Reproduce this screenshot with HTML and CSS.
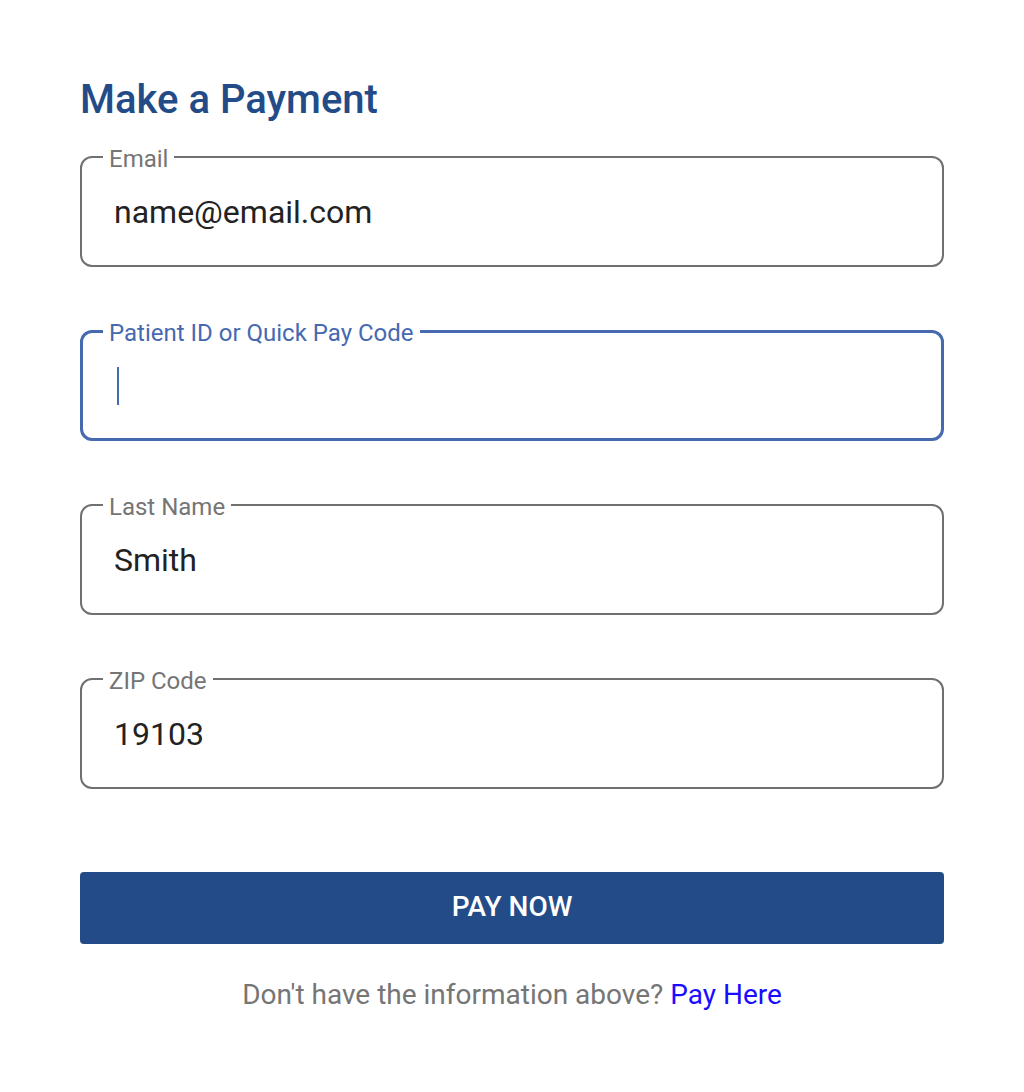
FILE: index.html
```html
<!DOCTYPE html>
<html lang="en">
<head>
<meta charset="utf-8">
<title>Make a Payment</title>
<link rel="stylesheet" href="styles.css">
</head>
<body>
<main class="page">
  <h1 class="title">Make a Payment</h1>
  <form class="form">
    <fieldset class="field">
      <legend class="label">Email</legend>
      <div class="value">name@email.com</div>
    </fieldset>
    <fieldset class="field focused">
      <legend class="label">Patient ID or Quick Pay Code</legend>
      <div class="value"><span class="caret"></span></div>
    </fieldset>
    <fieldset class="field">
      <legend class="label">Last Name</legend>
      <div class="value">Smith</div>
    </fieldset>
    <fieldset class="field">
      <legend class="label">ZIP Code</legend>
      <div class="value">19103</div>
    </fieldset>
    <button type="button" class="pay">PAY NOW</button>
    <p class="alt">Don't have the information above? <a href="#" class="link">Pay Here</a></p>
  </form>
</main>
</body>
</html>
```
FILE: styles.css
```css
html, body {
  margin: 0;
  padding: 0;
  background: #ffffff;
}
body {
  font-family: Roboto, "Liberation Sans", Arial, sans-serif;
}
.page {
  width: 864px;
  margin: 0 auto;
  padding-top: 76px;
}
.title {
  margin: 0;
  font-size: 40px;
  font-weight: 500;
  color: #234b87;
  line-height: 48px;
  letter-spacing: 0;
}
.form {
  display: flex;
  flex-direction: column;
  margin-top: 19px;
}
.field {
  margin: 0 0 50px 0;
  padding: 0 32px;
  height: 124px;
  box-sizing: border-box;
  border: 2px solid #707070;
  border-radius: 12px;
  min-width: 0;
}
.label {
  padding: 4px 6px 0 6px;
  margin-left: -11px;
  font-size: 24px;
  line-height: 24px;
  color: #757575;
}
.value {
  font-size: 32px;
  color: #222222;
  line-height: 36px;
  margin-top: 23px;
  height: 36px;
  display: flex;
  align-items: flex-start;
}
.focused {
  border: 3px solid #4669b0;
}
.focused .label {
  color: #4669b0;
  margin-left: -12px;
}
.caret {
  display: block;
  width: 2px;
  height: 38px;
  background: #4669b0;
  margin-left: 2px;
  margin-top: -1px;
}
.pay {
  margin-top: 33px;
  height: 72px;
  padding: 0 0 4px 0;
  border: 0;
  border-radius: 4px;
  background: #234b87;
  color: #ffffff;
  font-family: Roboto, "Liberation Sans", Arial, sans-serif;
  font-size: 28px;
  font-weight: 500;
  cursor: pointer;
}
.alt {
  margin: 35px 0 0 0;
  text-align: center;
  font-size: 28px;
  color: #757575;
  line-height: 32px;
}
.link {
  color: #1a0dff;
  text-decoration: none;
}
```
